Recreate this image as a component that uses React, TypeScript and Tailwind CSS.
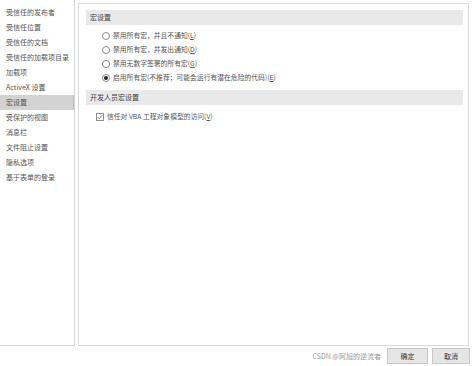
const navItems = [
  "受信任的发布者",
  "受信任位置",
  "受信任的文档",
  "受信任的加载项目录",
  "加载项",
  "ActiveX 设置",
  "宏设置",
  "受保护的视图",
  "消息栏",
  "文件阻止设置",
  "隐私选项",
  "基于表单的登录",
];

const macroOptions = [
  { label: "禁用所有宏，并且不通知(", key: "L", checked: false },
  { label: "禁用所有宏，并发出通知(", key: "D", checked: false },
  { label: "禁用无数字签署的所有宏(", key: "G", checked: false },
  { label: "启用所有宏(不推荐；可能会运行有潜在危险的代码)(", key: "E", checked: true },
];

const font = "font-['Noto_Sans_CJK_SC','Noto_Sans',sans-serif]";

const Radio = ({ checked }: { checked: boolean }) => (
  <span className="w-[8px] h-[8px] rounded-full border border-[#8a8a8a] bg-white flex items-center justify-center shrink-0">
    {checked && <span className="w-[4px] h-[4px] rounded-full bg-[#222]" />}
  </span>
);

export default function App() {
  return (
    <div className={`w-[474px] h-[366px] bg-white flex flex-col ${font} text-[#555] overflow-hidden`}>
      <div className="flex h-[346px] gap-[3px]">
        {/* left nav */}
        <div className="w-[75px] border-r border-b border-[#d4d4d4] pt-[5px] flex flex-col">
          {navItems.map((item) => (
            <div
              key={item}
              className={`h-[15px] pl-[6px] text-[7px] leading-[15px] whitespace-nowrap ${
                item === "宏设置" ? "bg-[#d3d3d3] border-r border-[#c0c0c0]" : ""
              }`}
            >
              {item}
            </div>
          ))}
        </div>

        {/* right content */}
        <div className="w-[391px] mt-[3px] border border-[#d8d8d8] pl-[7px] pr-[5px] pt-[6px]">
          <div className="h-[15px] bg-[#e9e9e9] pl-[4px] text-[7px] leading-[15px] text-[#444]">宏设置</div>
          <div className="flex flex-col gap-[5px] pl-[16px] pt-[6px] pb-[8px]">
            {macroOptions.map((o) => (
              <div key={o.key} className="flex items-center gap-[3px] h-[9px] text-[6.8px] leading-[9px] whitespace-nowrap">
                <Radio checked={o.checked} />
                <span>
                  {o.label}
                  <span className="underline">{o.key}</span>)
                </span>
              </div>
            ))}
          </div>
          <div className="h-[15px] bg-[#e9e9e9] pl-[4px] text-[7px] leading-[15px] text-[#444]">开发人员宏设置</div>
          <div className="flex items-center gap-[3px] pl-[10px] pt-[7px] text-[6.8px] leading-[9px] whitespace-nowrap">
            <span className="w-[8px] h-[8px] border border-[#8a8a8a] bg-white flex items-center justify-center">
              <svg viewBox="0 0 8 8" className="w-[6px] h-[6px]">
                <path d="M1 4.2 L3 6.2 L7 1.5" fill="none" stroke="#555" strokeWidth="0.9" />
              </svg>
            </span>
            <span>
              信任对 VBA 工程对象模型的访问(<span className="underline">V</span>)
            </span>
          </div>
        </div>
      </div>

      {/* footer buttons */}
      <div className="flex justify-end items-center gap-[4px] pr-[4px] pt-[2px]">
        <span className="text-[7px] leading-[14px] text-[#999] whitespace-nowrap mr-[2px]">CSDN @阿旭的逆流者</span>
        <div className="w-[41px] h-[16px] border border-[#c8c8c8] bg-[#e6e6e6] text-[7px] leading-[14px] text-center text-[#333]">确定</div>
        <div className="w-[38px] h-[16px] border border-[#c8c8c8] bg-[#e6e6e6] text-[7px] leading-[14px] text-center text-[#333]">取消</div>
      </div>
    </div>
  );
}
